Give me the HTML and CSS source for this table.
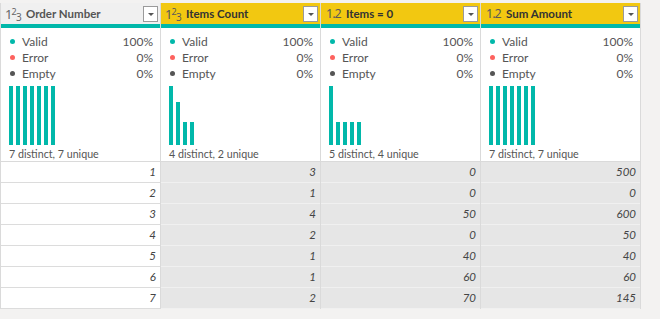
FILE: index.html
```html
<!DOCTYPE html>
<html>
<head>
<meta charset="utf-8">
<link rel="stylesheet" href="styles.css">
</head>
<body>
<div class="table">
  <div class="col first">
    <div class="head"><span class="ti"><span class="t1">1</span><span class="t2">2</span><span class="t3">3</span></span><span class="name">Order Number</span><span class="dd"></span></div>
    <div class="profile">
      <div class="stat"><span class="dot valid"></span><span class="lbl">Valid</span><span class="pct">100%</span></div>
      <div class="stat"><span class="dot error"></span><span class="lbl">Error</span><span class="pct">0%</span></div>
      <div class="stat"><span class="dot empty"></span><span class="lbl">Empty</span><span class="pct">0%</span></div>
      <div class="hist"><i></i><i></i><i></i><i></i><i></i><i></i><i></i></div>
      <div class="distinct">7 distinct, 7 unique</div>
    </div>
    <div class="cell">1</div><div class="cell">2</div><div class="cell">3</div><div class="cell">4</div><div class="cell">5</div><div class="cell">6</div><div class="cell">7</div>
  </div>
  <div class="col sel">
    <div class="head"><span class="ti"><span class="t1">1</span><span class="t2">2</span><span class="t3">3</span></span><span class="name">Items Count</span><span class="dd"></span></div>
    <div class="profile">
      <div class="stat"><span class="dot valid"></span><span class="lbl">Valid</span><span class="pct">100%</span></div>
      <div class="stat"><span class="dot error"></span><span class="lbl">Error</span><span class="pct">0%</span></div>
      <div class="stat"><span class="dot empty"></span><span class="lbl">Empty</span><span class="pct">0%</span></div>
      <div class="hist"><i></i><i style="height:43px"></i><i style="height:23px"></i><i style="height:23px"></i></div>
      <div class="distinct">4 distinct, 2 unique</div>
    </div>
    <div class="cell">3</div><div class="cell">1</div><div class="cell">4</div><div class="cell">2</div><div class="cell">1</div><div class="cell">1</div><div class="cell">2</div>
  </div>
  <div class="col sel">
    <div class="head"><span class="tf">1.2</span><span class="name">Items = 0</span><span class="dd"></span></div>
    <div class="profile">
      <div class="stat"><span class="dot valid"></span><span class="lbl">Valid</span><span class="pct">100%</span></div>
      <div class="stat"><span class="dot error"></span><span class="lbl">Error</span><span class="pct">0%</span></div>
      <div class="stat"><span class="dot empty"></span><span class="lbl">Empty</span><span class="pct">0%</span></div>
      <div class="hist"><i></i><i style="height:23px"></i><i style="height:23px"></i><i style="height:23px"></i><i style="height:23px"></i></div>
      <div class="distinct">5 distinct, 4 unique</div>
    </div>
    <div class="cell">0</div><div class="cell">0</div><div class="cell">50</div><div class="cell">0</div><div class="cell">40</div><div class="cell">60</div><div class="cell">70</div>
  </div>
  <div class="col sel">
    <div class="head"><span class="tf">1.2</span><span class="name">Sum Amount</span><span class="dd"></span></div>
    <div class="profile">
      <div class="stat"><span class="dot valid"></span><span class="lbl">Valid</span><span class="pct">100%</span></div>
      <div class="stat"><span class="dot error"></span><span class="lbl">Error</span><span class="pct">0%</span></div>
      <div class="stat"><span class="dot empty"></span><span class="lbl">Empty</span><span class="pct">0%</span></div>
      <div class="hist"><i></i><i></i><i></i><i></i><i></i><i></i><i></i></div>
      <div class="distinct">7 distinct, 7 unique</div>
    </div>
    <div class="cell">500</div><div class="cell">0</div><div class="cell">600</div><div class="cell">50</div><div class="cell">40</div><div class="cell">60</div><div class="cell">145</div>
  </div>
</div>
</body>
</html>
```
FILE: styles.css
```css
html, body {
  margin: 0;
  padding: 0;
  background: #f3f2f1;
  font-family: "Segoe UI", Lato, "Open Sans", sans-serif;
  color: #333;
}
body {
  padding-top: 3px;
}
.table {
  display: flex;
  width: 641px;
  border-left: 1px solid #dadada;
}
.col {
  width: 159px;
  border-right: 1px solid #dadada;
  display: flex;
  flex-direction: column;
}
.head {
  height: 21px;
  background: #f0f0f0;
  display: flex;
  align-items: center;
  padding: 0 2px 0 4px;
  border-bottom: 4px solid #01b8aa;
}
.sel .head {
  background: #f2c811;
}
.ti {
  color: #666;
  width: 21px;
  height: 21px;
  display: flex;
  align-items: flex-start;
  font-family: "Noto Sans", "Open Sans", sans-serif;
  flex: none;
  overflow: hidden;
}
.t1 {
  font-size: 13px;
  line-height: 13px;
  margin-top: 5px;
  margin-right: -1px;
}
.t2 {
  font-size: 9px;
  line-height: 9px;
  margin-top: 4px;
  margin-right: -0.5px;
}
.t3 {
  font-size: 10px;
  line-height: 10px;
  margin-top: 9px;
}
.tf {
  font-size: 12.5px;
  color: #666;
  width: 21px;
  flex: none;
  letter-spacing: -1px;
  padding-left: 1px;
  box-sizing: border-box;
  font-family: "Noto Sans", "Open Sans", sans-serif;
}
.sel .ti, .sel .tf {
  color: #5a5a5a;
}
.name {
  font-size: 11.5px;
  font-weight: 700;
  color: #555;
  flex: 1;
}
.sel .name {
  color: #333;
}
.dd {
  width: 13px;
  height: 14px;
  border: 1px solid #9a9a9a;
  background: #fff;
  position: relative;
  flex: none;
}
.dd::after {
  content: "";
  position: absolute;
  left: 4px;
  top: 6px;
  border-left: 3px solid transparent;
  border-right: 3px solid transparent;
  border-top: 3px solid #555;
}
.profile {
  background: #fff;
  height: 134px;
  padding: 5px 7px 0 8px;
  box-sizing: border-box;
  border-bottom: 1px solid #dadada;
  display: flex;
  flex-direction: column;
}
.stat {
  display: flex;
  align-items: center;
  height: 16px;
  font-size: 12px;
  color: #555;
}
.dot {
  width: 5px;
  height: 5px;
  border-radius: 50%;
  margin: 0 7px 0 1px;
}
.valid { background: #01b8aa; }
.error { background: #fd625e; }
.empty { background: #555; }
.lbl { flex: 1; }
.pct { text-align: right; }
.hist {
  margin-top: 5px;
  height: 59px;
  display: flex;
  align-items: flex-end;
  gap: 3px;
}
.hist i {
  display: block;
  width: 4px;
  height: 59px;
  background: #01b8aa;
}
.distinct {
  font-size: 10.7px;
  color: #555;
  margin-top: 2px;
  line-height: 14px;
}
.cell {
  height: 20px;
  border-bottom: 1px solid #dcdcdc;
  font-size: 11.5px;
  font-style: italic;
  color: #444;
  text-align: right;
  padding-right: 4px;
  line-height: 20px;
  background: #fff;
}
.sel .cell {
  background: #e6e6e6;
  border-bottom-color: #f0f0f0;
}
```
